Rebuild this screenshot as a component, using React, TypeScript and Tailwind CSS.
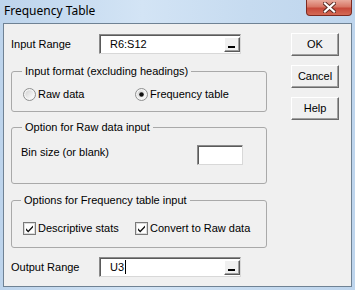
import React from "react";

function RefEdit({ value, caret }: { value: string; caret?: boolean }) {
  return (
    <div className="w-[142px] h-[20px] bg-white border border-t-[#8a8a8a] border-l-[#8a8a8a] border-b-[#d8d8d8] border-r-[#d8d8d8] shadow-[inset_1px_1px_0_#5a5a5a] flex items-center justify-between">
      <div className="pl-[10px] flex items-center text-[11px] leading-[13px] text-black">
        <span>{value}</span>
        {caret && <span className="w-[1px] h-[14px] bg-black ml-[1px]" />}
      </div>
      <div className="mr-[0px] w-[16px] h-[15px] bg-[#f0f0f0] border border-t-white border-l-white border-b-[#5a5a5a] border-r-[#5a5a5a] shadow-[inset_-1px_-1px_0_#a0a0a0] flex items-end justify-center pb-[3px]">
        <span className="w-[7px] h-[2px] bg-black ml-[-1px]" />
      </div>
    </div>
  );
}

function Radio({ checked }: { checked?: boolean }) {
  return (
    <svg width="13" height="13" viewBox="0 0 13 13" className="shrink-0">
      <defs>
        <linearGradient id={checked ? "rg1" : "rg0"} x1="0" y1="0" x2="1" y2="1">
          <stop offset="0" stopColor="#d2d2d2" />
          <stop offset="1" stopColor="#ffffff" />
        </linearGradient>
      </defs>
      <circle cx="6.5" cy="6.5" r="6" fill="#f4f4f4" stroke="#8e8f8f" strokeWidth="1" />
      <circle cx="6.5" cy="6.5" r="4.2" fill={`url(#${checked ? "rg1" : "rg0"})`} />
      {checked && <circle cx="6.5" cy="6.5" r="2.3" fill="#111" />}
    </svg>
  );
}

function Check() {
  return (
    <svg width="13" height="13" viewBox="0 0 13 13" className="shrink-0">
      <rect x="0.5" y="0.5" width="12" height="12" fill="#ffffff" stroke="#7a7a7a" />
      <rect x="1.5" y="1.5" width="10" height="10" fill="none" stroke="#dcdcdc" />
      <path d="M3 6.2 L5.2 8.6 L10 3.6 L10 5.6 L5.2 10.6 L3 8.2 Z" fill="#111" />
    </svg>
  );
}

function Button({ label }: { label: string }) {
  return (
    <div className="w-[48px] h-[23px] bg-[#f0f0f0] border border-t-white border-l-white border-b-[#6a6a6a] border-r-[#6a6a6a] shadow-[inset_-1px_-1px_0_#a0a0a0] flex items-center justify-center text-[11px] leading-[13px] text-black">
      {label}
    </div>
  );
}

export default function App() {
  return (
    <div className="w-[355px] h-[290px] flex flex-col overflow-hidden bg-[linear-gradient(to_right,#bdd4ec,#d3e4f5_40%,#c6dbf0_70%,#bed5ed)] font-['Liberation_Sans',Arial,sans-serif]">
      <div className="h-[23px] flex items-start justify-between shrink-0">
        <div className="pl-[4px] pt-[3px] text-[12px] leading-[15px] text-black font-['Noto_Sans',sans-serif]">
          Frequency Table
        </div>
        <div className="mr-[3px] w-[46px] h-[16px] rounded-b-[4px] border border-t-0 border-[#7d2a20] bg-[linear-gradient(to_bottom,#e9a99c,#d87766_45%,#c7493a_55%,#d46a55)] flex items-center justify-center">
          <svg width="13" height="11" viewBox="0 0 13 11">
            <path d="M2 1.5 L11 9.5 M11 1.5 L2 9.5" stroke="#5a2a22" strokeWidth="4" strokeLinecap="square" />
            <path d="M2 1.5 L11 9.5 M11 1.5 L2 9.5" stroke="#ffffff" strokeWidth="2.2" strokeLinecap="square" />
          </svg>
        </div>
      </div>
      <div className="mx-[3px] mb-[3px] flex-1 border border-[#6f8294] bg-[#f0f0f0] flex text-[11px] leading-[13px] text-black">
        <div className="w-[256px] ml-[7px] flex flex-col">
          <div className="mt-[10px] flex items-center">
            <div className="w-[88px]">Input Range</div>
            <RefEdit value="R6:S12" />
          </div>

          <fieldset className="mt-[11px] border border-[#a9a9a9] rounded-[3px]">
            <legend className="ml-[10px] px-[3px] leading-[13px]">Input format (excluding headings)</legend>
            <div className="mt-[9px] mb-[10px] pl-[11px] flex items-center h-[14px]">
              <div className="w-[112px] flex items-center">
                <Radio />
                <span className="ml-[2px]">Raw data</span>
              </div>
              <div className="flex items-center">
                <Radio checked />
                <span className="ml-[2px]">Frequency table</span>
              </div>
            </div>
          </fieldset>

          <fieldset className="mt-[9px] border border-[#a9a9a9] rounded-[3px]">
            <legend className="ml-[10px] px-[3px] leading-[13px]">Option for Raw data input</legend>
            <div className="mt-[11px] mb-[18px] pl-[9px] flex items-start">
              <div className="w-[176px] pt-[1px]">Bin size (or blank)</div>
              <div className="w-[46px] h-[20px] bg-white border border-t-[#8a8a8a] border-l-[#8a8a8a] border-b-[#d8d8d8] border-r-[#d8d8d8] shadow-[inset_1px_1px_0_#5a5a5a]" />
            </div>
          </fieldset>

          <fieldset className="mt-[10px] border border-[#a9a9a9] rounded-[3px]">
            <legend className="ml-[9px] px-[3px] leading-[13px]">Options for Frequency table input</legend>
            <div className="mt-[14px] mb-[12px] pl-[11px] flex items-center h-[14px]">
              <div className="w-[112px] flex items-center">
                <Check />
                <span className="ml-[2px]">Descriptive stats</span>
              </div>
              <div className="flex items-center">
                <Check />
                <span className="ml-[2px]">Convert to Raw data</span>
              </div>
            </div>
          </fieldset>

          <div className="mt-[9px] flex items-center">
            <div className="w-[88px]">Output Range</div>
            <RefEdit value="U3" caret />
          </div>
        </div>

        <div className="ml-[24px] mt-[9px] flex flex-col gap-[9px]">
          <Button label="OK" />
          <Button label="Cancel" />
          <Button label="Help" />
        </div>
      </div>
    </div>
  );
}
